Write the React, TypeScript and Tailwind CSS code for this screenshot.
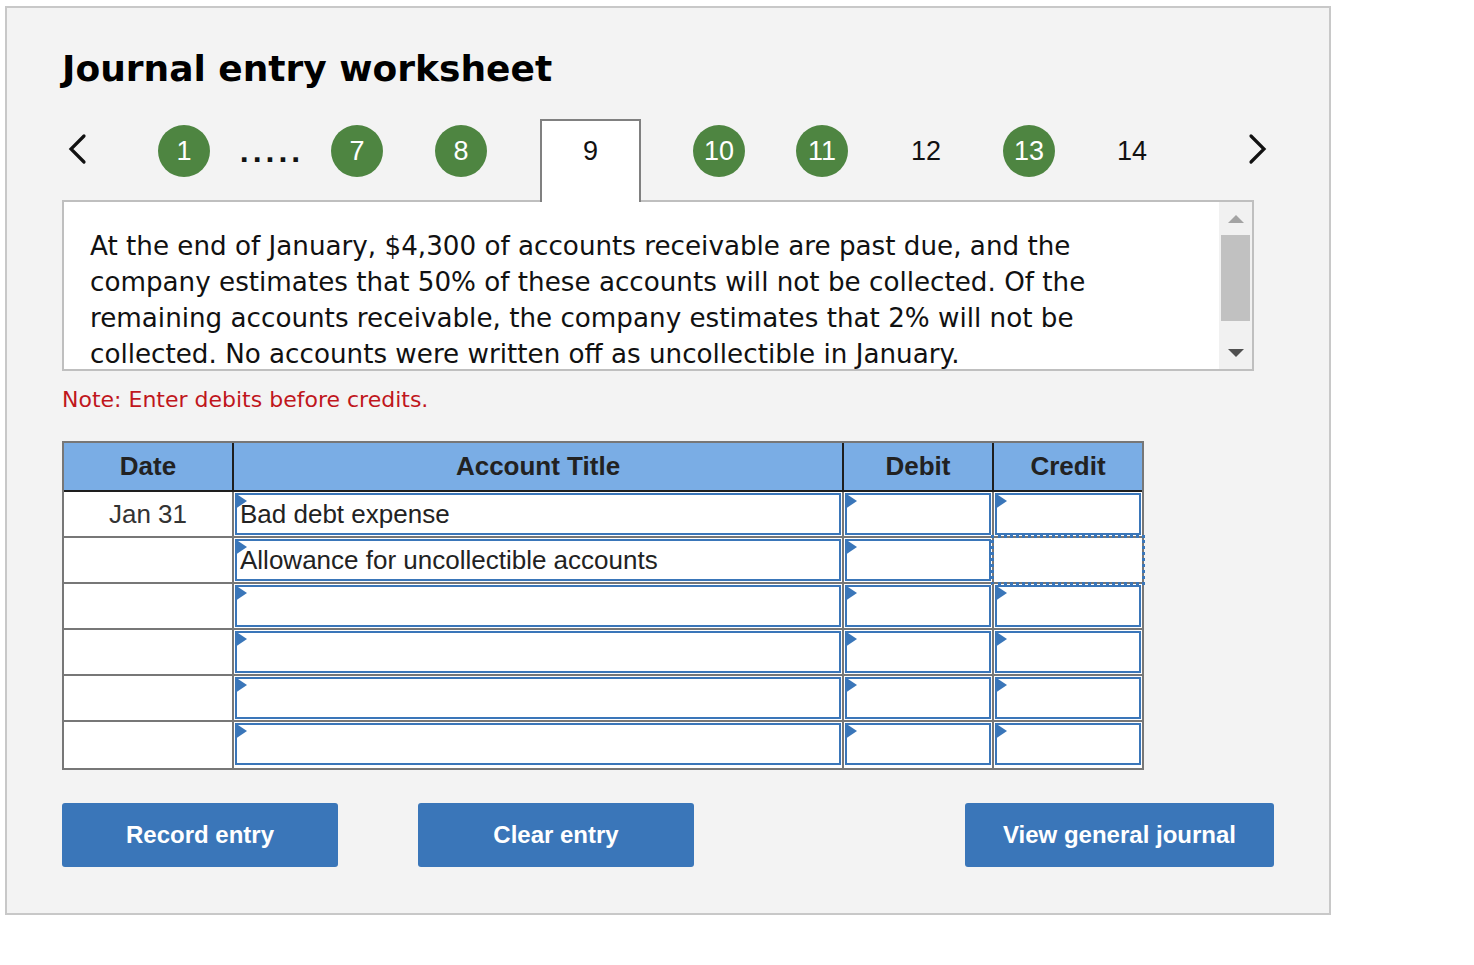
import React from 'react';

const verdana = { fontFamily: '"DejaVu Sans", Verdana, sans-serif' };
const arial = { fontFamily: '"Liberation Sans", Arial, sans-serif' };

type Step = { label: string; done: boolean; ml: string };

const steps: Step[] = [
    { label: '10', done: true, ml: 'ml-[52px]' },
    { label: '11', done: true, ml: 'ml-[51px]' },
    { label: '12', done: false, ml: 'ml-[52px]' },
    { label: '13', done: true, ml: 'ml-[51px]' },
    { label: '14', done: false, ml: 'ml-[51px]' },
];

const rows = [
    { date: 'Jan 31', account: 'Bad debt expense' },
    { date: '', account: 'Allowance for uncollectible accounts' },
    { date: '', account: '' },
    { date: '', account: '' },
    { date: '', account: '' },
    { date: '', account: '' },
];

const Chevron: React.FC<{ dir: 'left' | 'right' }> = ({ dir }) => (
    <svg width="32" height="32" viewBox="0 0 32 32" className="block">
        <polyline
            points={dir === 'left' ? '22,3 9,16 22,29' : '10,3 23,16 10,29'}
            fill="none"
            stroke="#111"
            strokeWidth="3.2"
            strokeLinecap="round"
            strokeLinejoin="miter"
        />
    </svg>
);

const Circle: React.FC<{ label: string; ml: string }> = ({ label, ml }) => (
    <div
        className={`${ml} mt-[6px] w-[52px] h-[52px] rounded-full bg-[#4e8541] text-white flex items-center justify-center text-[27px] leading-none shrink-0`}
        style={arial}
    >
        {label}
    </div>
);

const Plain: React.FC<{ label: string; ml: string }> = ({ label, ml }) => (
    <div
        className={`${ml} mt-[6px] w-[52px] h-[52px] text-[#111] flex items-center justify-center text-[27px] leading-none shrink-0`}
        style={arial}
    >
        {label}
    </div>
);

const InputBox: React.FC<{ text?: string }> = ({ text }) => (
    <div className="relative m-px h-[42px] border-2 border-[#3a76b9] bg-white flex items-center pl-[3px] text-[26px] text-[#222] whitespace-nowrap overflow-hidden" style={arial}>
        <span className="absolute -top-[2px] -left-[2px] w-0 h-0 border-y-[8px] border-y-transparent border-l-[12px] border-l-[#3a76b9]" />
        {text}
    </div>
);

export default function App() {
    return (
        <div className="min-h-screen bg-white pt-[6px] pl-[5px]">
            <div className="w-[1326px] h-[909px] border-2 border-[#c8c8c8] bg-[#f3f3f3] px-[55px] pt-[43px]">
                <h1 className="text-[36px] leading-none font-bold text-black" style={verdana}>
                    Journal entry worksheet
                </h1>

                {/* step navigation */}
                <div className="mt-[32px] flex items-start h-[81px]">
                    <div className="mt-[14px] w-[32px] shrink-0">
                        <Chevron dir="left" />
                    </div>
                    <Circle label="1" ml="ml-[64px]" />
                    <div className="ml-[29px] w-[66px] h-[64px] flex items-center justify-center text-[32px] font-bold tracking-[4px] text-[#111]" style={arial}>
                        .....
                    </div>
                    <Circle label="7" ml="ml-[26px]" />
                    <Circle label="8" ml="ml-[52px]" />
                    <div className="relative z-10 ml-[53px] w-[101px] h-[83px] shrink-0 border-2 border-b-0 border-[#808080] bg-white flex justify-center pt-[17px] text-[27px] leading-none text-[#111]" style={arial}>
                        9
                    </div>
                    {steps.map(s =>
                        s.done ? <Circle key={s.label} label={s.label} ml={s.ml} /> : <Plain key={s.label} label={s.label} ml={s.ml} />
                    )}
                    <div className="ml-[83px] mt-[14px] w-[32px] shrink-0">
                        <Chevron dir="right" />
                    </div>
                </div>

                {/* question text */}
                <div className="w-[1192px] h-[171px] border-2 border-[#bfbfbf] bg-white flex">
                    <div className="flex-1 overflow-hidden pl-[26px] pr-[100px] pt-[26px] text-[26.2px] leading-[36px] text-[#111]" style={verdana}>
                        At the end of January, $4,300 of accounts receivable are past due, and the company estimates that 50% of these accounts will not be collected. Of the remaining accounts receivable, the company estimates that 2% will not be collected. No accounts were written off as uncollectible in January.
                    </div>
                    <div className="w-[33px] bg-[#f1f1f1] flex flex-col items-center">
                        <div className="h-[33px] flex items-center justify-center">
                            <span className="w-0 h-0 border-x-[8px] border-x-transparent border-b-[8px] border-b-[#a3a3a3]" />
                        </div>
                        <div className="w-[29px] h-[86px] bg-[#c1c1c1]" />
                        <div className="flex-1" />
                        <div className="h-[33px] flex items-center justify-center">
                            <span className="w-0 h-0 border-x-[8px] border-x-transparent border-t-[8px] border-t-[#505050]" />
                        </div>
                    </div>
                </div>

                <p className="mt-[14px] text-[22px] leading-[30px] text-[#c0161c]" style={verdana}>
                    Note: Enter debits before credits.
                </p>

                {/* journal table */}
                <div className="mt-[26px] w-[1082px] border-2 border-[#777]" style={arial}>
                    <div className="flex h-[49px] bg-[#7aade5] border-b-2 border-[#1e1e1e] text-[26px] font-bold text-[#222]">
                        <div className="w-[170px] border-r-2 border-[#1e1e1e] flex items-center justify-center">Date</div>
                        <div className="w-[610px] border-r-2 border-[#1e1e1e] flex items-center justify-center">Account Title</div>
                        <div className="w-[150px] border-r-2 border-[#1e1e1e] flex items-center justify-center">Debit</div>
                        <div className="flex-1 flex items-center justify-center">Credit</div>
                    </div>
                    {rows.map((r, i) => (
                        <div key={i} className={`flex h-[46px] bg-white ${i < rows.length - 1 ? 'border-b-2 border-[#777]' : ''}`}>
                            <div className="w-[170px] border-r-2 border-[#777] flex items-center justify-center text-[26px] text-[#333]">
                                {r.date}
                            </div>
                            <div className="w-[610px] border-r-2 border-[#777]">
                                <InputBox text={r.account} />
                            </div>
                            <div className="w-[150px] border-r-2 border-[#777]">
                                <InputBox />
                            </div>
                            <div className="flex-1">
                                {i === 1 ? (
                                    <div className="h-[44px] outline-[3px] outline-dotted outline-[#3a76b9] bg-white" />
                                ) : (
                                    <InputBox />
                                )}
                            </div>
                        </div>
                    ))}
                </div>

                {/* actions */}
                <div className="mt-[33px] flex text-[24px] font-bold text-white" style={arial}>
                    <button className="w-[276px] h-[64px] rounded-[3px] bg-[#3a76b9]">Record entry</button>
                    <button className="ml-[80px] w-[276px] h-[64px] rounded-[3px] bg-[#3a76b9]">Clear entry</button>
                    <button className="ml-auto w-[309px] h-[64px] rounded-[3px] bg-[#3a76b9]">View general journal</button>
                </div>
            </div>
        </div>
    );
}
